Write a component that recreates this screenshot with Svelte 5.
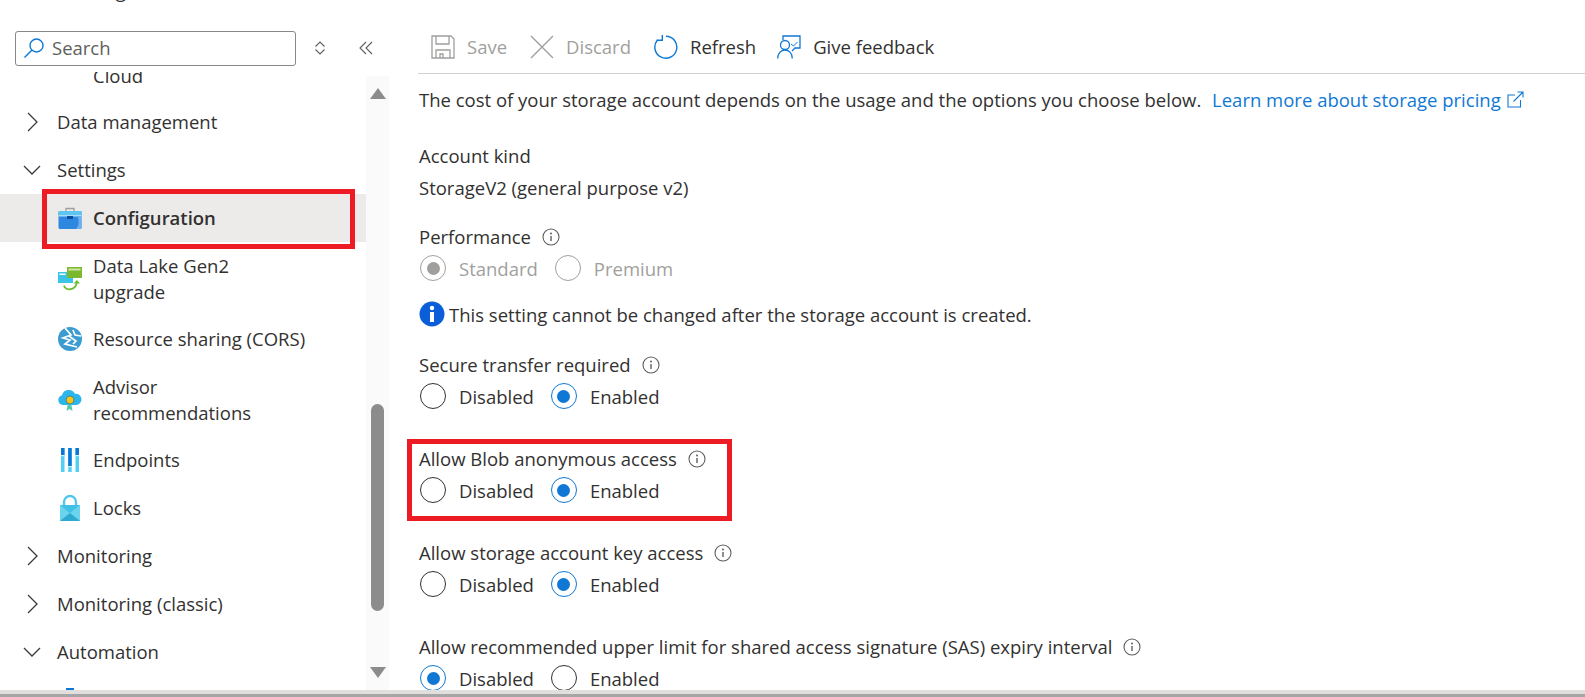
<script>
  const radioGroups = [
    { label: 'Secure transfer required', value: 'Enabled' },
    { label: 'Allow Blob anonymous access', value: 'Enabled', marked: true },
    { label: 'Allow storage account key access', value: 'Enabled' },
    { label: 'Allow recommended upper limit for shared access signature (SAS) expiry interval', value: 'Disabled' }
  ];
  const options = ['Disabled', 'Enabled'];
</script>

{#snippet chevron(open)}
  <svg class="chev" width="24" height="24" viewBox="0 0 24 24" fill="none" stroke="#3b3a39" stroke-width="1.3">
    {#if open}
      <path d="M4 8l8 8 8-8" />
    {:else}
      <path d="M8 3l9 9-9 9" />
    {/if}
  </svg>
{/snippet}

{#snippet infoIcon()}
  <svg class="info" width="18" height="18" viewBox="0 0 18 18" fill="none">
    <circle cx="9" cy="9" r="8" stroke="#605e5c" stroke-width="1.1" />
    <path d="M9 8v5" stroke="#605e5c" stroke-width="1.4" />
    <circle cx="9" cy="5.5" r="1" fill="#605e5c" />
  </svg>
{/snippet}

{#snippet radio(checked, disabled)}
  <span class="radio" class:checked class:disabled></span>
{/snippet}

<div class="page">
  <aside class="sidebar">
    <div class="crumb">Settings</div>
    <div class="search-row">
      <div class="search">
        <svg width="22" height="22" viewBox="0 0 22 22" fill="none" stroke="#0f78d4" stroke-width="1.4">
          <circle cx="13.5" cy="8.5" r="6.5" />
          <path d="M9 13l-7.5 7.5" />
        </svg>
        <span>Search</span>
      </div>
      <svg class="sort" width="12" height="16" viewBox="0 0 12 16" fill="none" stroke="#605e5c" stroke-width="1.1">
        <path d="M1.5 6.5L6 2l4.5 4.5M1.5 9.5L6 14l4.5-4.5" />
      </svg>
      <svg class="collapse" width="14" height="14" viewBox="0 0 14 14" fill="none" stroke="#605e5c" stroke-width="1.1">
        <path d="M7 1L1 7l6 6M13 1L7 7l6 6" />
      </svg>
    </div>

    <div class="nav-wrap">
      <nav class="nav">
        <div class="sub cut-top"><span class="sub-text">Cloud</span></div>
        <div class="group">{@render chevron(false)}<span>Data management</span></div>
        <div class="group">{@render chevron(true)}<span>Settings</span></div>

        <div class="sub active">
          <svg class="ico" width="24" height="24" viewBox="0 0 24 24">
            <path d="M8 5V2.5h8V5" fill="none" stroke="#a19f9d" stroke-width="1.3" />
            <rect x="0.5" y="5" width="23" height="18" rx="1.5" fill="#2f87e0" />
            <rect x="0.5" y="5" width="23" height="4" fill="#5ec4f0" />
            <rect x="0.5" y="9" width="23" height="1.5" fill="#a8dcf7" />
            <rect x="9" y="10" width="6" height="3" fill="#0a4f9e" />
            <path d="M18 23c3-3 3-7 2-12h3.5v12z" fill="#6cb0ee" />
          </svg>
          <span class="sub-text">Configuration</span>
          <span class="mark-config"></span>
        </div>

        <div class="sub tall">
          <svg class="ico" width="24" height="26" viewBox="0 0 24 26">
            <rect x="0" y="6" width="15" height="11" fill="#3cc4e8" />
            <rect x="1.5" y="7.5" width="6" height="1.5" fill="#fff" />
            <rect x="9" y="1" width="15" height="11" fill="#7cb82f" />
            <rect x="10.5" y="2.5" width="12" height="2" fill="#cfe6a8" />
            <path d="M6 19.5c1 5 11 6 13-3" fill="none" stroke="#6fbd35" stroke-width="1.8" />
            <path d="M15.5 17.5l3.5-3.5 3 3.5z" fill="#6fbd35" />
          </svg>
          <span class="sub-text">Data Lake Gen2<br />upgrade</span>
        </div>

        <div class="sub">
          <svg class="ico" width="24" height="24" viewBox="0 0 24 24">
            <circle cx="12" cy="12" r="12" fill="#3c9cd0" />
            <path d="M7 1l6 7-8 3 7 2-5 4 12 3M15 3l2 5 6 1M11 9l7 5-3 3" fill="none" stroke="#fff" stroke-width="1.7" />
          </svg>
          <span class="sub-text">Resource sharing (CORS)</span>
        </div>

        <div class="sub tall">
          <svg class="ico" width="24" height="24" viewBox="0 0 24 24">
            <path d="M5 17a5 5 0 0 1-1-9.8 7 7 0 0 1 13-1.5A5.5 5.5 0 0 1 18.5 17z" fill="#2cb5ea" />
            <path d="M10 15l-1.5 8 3-2 3 2-1.500-8z" fill="#4fc9b0" />
            <circle cx="12" cy="12" r="4" fill="#fdc111" stroke="#1b7fa8" stroke-width="0.8" />
          </svg>
          <span class="sub-text">Advisor<br />recommendations</span>
        </div>

        <div class="sub">
          <svg class="ico" width="24" height="24" viewBox="0 0 24 24">
            <rect x="3" y="0" width="3.5" height="24" fill="#50d0f5" />
            <rect x="10.2" y="0" width="3.5" height="24" fill="#50d0f5" />
            <rect x="17.5" y="0" width="3.5" height="24" fill="#50d0f5" />
            <rect x="3" y="0" width="3.5" height="7" fill="#0a78d4" />
            <rect x="3" y="7" width="3.5" height="1.2" fill="#d6f3fc" />
            <rect x="10.2" y="0" width="3.5" height="18" fill="#0a78d4" />
            <rect x="10.2" y="18" width="3.5" height="1.2" fill="#d6f3fc" />
            <rect x="17.5" y="0" width="3.5" height="7" fill="#0a78d4" />
            <rect x="17.5" y="7" width="3.5" height="1.2" fill="#d6f3fc" />
          </svg>
          <span class="sub-text">Endpoints</span>
        </div>

        <div class="sub">
          <svg class="ico" width="24" height="26" viewBox="0 0 24 26">
            <path d="M6 11V7a6 6 0 0 1 12 0v4" fill="none" stroke="#4fc6ea" stroke-width="2.4" />
            <rect x="2" y="10" width="20" height="16" rx="1" fill="#3fc1e6" />
            <path d="M2 10l10 8 10-8v16H2z" fill="#6bd3ee" />
            <path d="M2 26l10-8 10 8z" fill="#2ea9cf" />
          </svg>
          <span class="sub-text">Locks</span>
        </div>

        <div class="group">{@render chevron(false)}<span>Monitoring</span></div>
        <div class="group">{@render chevron(false)}<span>Monitoring (classic)</span></div>
        <div class="group">{@render chevron(true)}<span>Automation</span></div>
        <div class="sub">
          <svg class="ico" width="24" height="24" viewBox="0 0 24 24"><rect x="8" y="0" width="8" height="20" fill="#0a78d4" /></svg>
        </div>
      </nav>

      <div class="scrollbar">
        <span class="arrow up"></span>
        <div class="track"><div class="thumb"></div></div>
        <span class="arrow down"></span>
      </div>
    </div>
  </aside>

  <main class="main">
    <div class="toolbar">
      <button class="tool off">
        <svg width="24" height="24" viewBox="0 0 24 24" fill="none" stroke="#a19f9d" stroke-width="1.3">
          <path d="M1 1h19l3 3v19H1z" />
          <path d="M5 1v8h13V1M5 23v-8h14v8M9 23v-4h3v4" />
        </svg>
        Save
      </button>
      <button class="tool off">
        <svg width="24" height="24" viewBox="0 0 24 24" fill="none" stroke="#a19f9d" stroke-width="1.4">
          <path d="M1 1l22 22M23 1L1 23" />
        </svg>
        Discard
      </button>
      <button class="tool">
        <svg width="24" height="24" viewBox="0 0 24 24" fill="none" stroke="#0f78d4" stroke-width="1.4">
          <path d="M12 1.2A11 11 0 1 1 3.5 5" />
          <path d="M8.3 0v5.3H2.7" />
        </svg>
        Refresh
      </button>
      <button class="tool feedback">
        <svg width="24" height="24" viewBox="0 0 24 24" fill="none" stroke="#0f78d4" stroke-width="1.3">
          <path d="M6 5V1h17v12h-5l-3 3" />
          <circle cx="8" cy="10" r="4.5" />
          <path d="M0.7 23.5c0-5 3-8.5 7.3-8.5s7.3 3.5 7.3 8.5" />
          <path d="M14 9l2.5 2 4-4" stroke-width="1" />
        </svg>
        Give feedback
      </button>
    </div>

    <div class="content">
      <p class="intro">
        The cost of your storage account depends on the usage and the options you choose below.
        <a href="#pricing">Learn more about storage pricing
          <svg width="17" height="17" viewBox="0 0 17 17" fill="none" stroke="#0f78d4" stroke-width="1.1">
            <path d="M13.5 9v7H1V4h7M6.5 10.5L16 1M10.5 1H16v5.5" />
          </svg>
        </a>
      </p>

      <div class="kind">
        <div class="line">Account kind</div>
        <div class="line">StorageV2 (general purpose v2)</div>
      </div>

      <div class="field perf">
        <div class="label">Performance {@render infoIcon()}</div>
        <div class="radios wide">
          <span class="opt off">{@render radio(true, true)}Standard</span>
          <span class="opt off">{@render radio(false, true)}Premium</span>
        </div>
      </div>

      <div class="notice">
        <svg width="26" height="26" viewBox="0 0 26 26">
          <circle cx="13" cy="13" r="12.5" fill="#0a5fd8" />
          <circle cx="13" cy="7" r="2.2" fill="#fff" />
          <rect x="11" y="11" width="4" height="10" fill="#fff" />
        </svg>
        This setting cannot be changed after the storage account is created.
      </div>

      {#each radioGroups as group}
        <div class="field" class:marked={group.marked}>
          {#if group.marked}<span class="mark-blob"></span>{/if}
          <div class="label">{group.label} {@render infoIcon()}</div>
          <div class="radios">
            {#each options as option}
              <span class="opt">{@render radio(option === group.value, false)}{option}</span>
            {/each}
          </div>
        </div>
      {/each}
    </div>
  </main>
</div>
<div class="bottom-edge"></div>

<style>
  :global(body) {
    margin: 0;
    background: #fff;
    overflow: hidden;
  }

  .page {
    display: flex;
    height: 690px;
    overflow: hidden;
    font-family: "Open Sans", "Noto Sans", sans-serif;
    font-size: 18.5px;
    color: #323130;
  }

  .bottom-edge {
    height: 7px;
    border-top: 4px solid #e1dfdd;
    background: #a6a6a6;
    box-sizing: border-box;
  }

  .sidebar {
    width: 418px;
    flex: none;
    display: flex;
    flex-direction: column;
    overflow: hidden;
  }

  .crumb {
    height: 46px;
    margin-top: -22px;
    padding-left: 66px;
    line-height: 26px;
  }

  .search-row {
    display: flex;
    align-items: center;
    height: 48px;
    flex: none;
    padding-left: 15px;
  }

  .search {
    width: 281px;
    height: 35px;
    box-sizing: border-box;
    border: 1px solid #8a8886;
    border-radius: 3px;
    display: flex;
    align-items: center;
    gap: 7px;
    padding-left: 7px;
    color: #605e5c;
  }

  .search span {
    padding-bottom: 2px;
  }

  .sort {
    margin-left: 18px;
  }

  .collapse {
    margin-left: 33px;
  }

  .nav-wrap {
    display: flex;
    flex: 1;
    min-height: 0;
  }

  .nav {
    width: 366px;
    flex: none;
    overflow: hidden;
  }

  .group {
    height: 48px;
    display: flex;
    align-items: center;
    gap: 13px;
    padding-left: 20px;
  }

  .group span {
    padding-bottom: 2px;
  }

  .chev {
    flex: none;
  }

  .sub {
    height: 48px;
    display: flex;
    align-items: center;
    padding-left: 57px;
    position: relative;
  }

  .sub.tall {
    height: 73px;
  }

  .sub.cut-top {
    height: 26px;
    align-items: flex-start;
    overflow: hidden;
  }

  .cut-top .sub-text {
    margin-top: -9px;
  }

  .ico {
    flex: none;
    position: absolute;
    left: 58px;
    top: 50%;
    transform: translateY(-50%);
  }

  .sub-text {
    margin-left: 36px;
    line-height: 26px;
  }

  .active {
    background: #edebe9;
    font-weight: 600;
  }

  .mark-config {
    position: absolute;
    left: 42px;
    top: -5px;
    width: 313px;
    height: 60px;
    border: 5px solid #ed1c24;
    box-sizing: border-box;
    pointer-events: none;
  }

  .scrollbar {
    width: 23px;
    flex: none;
    margin-top: 4px;
    background: #fafafa;
    display: flex;
    flex-direction: column;
    align-items: center;
  }

  .track {
    flex: 1;
    width: 13px;
    padding-top: 305px;
    box-sizing: border-box;
  }

  .thumb {
    height: 207px;
    border-radius: 7px;
    background: #8c8c8c;
  }

  .arrow {
    width: 0;
    height: 0;
    border-left: 8px solid transparent;
    border-right: 8px solid transparent;
  }

  .arrow.up {
    border-bottom: 11px solid #8c8c8c;
    margin-top: 12px;
  }

  .arrow.down {
    border-top: 11px solid #8c8c8c;
    margin-bottom: 12px;
  }

  .main {
    flex: 1;
    min-width: 0;
  }

  .toolbar {
    height: 74px;
    box-sizing: border-box;
    border-bottom: 1px solid #d2d0ce;
    display: flex;
    align-items: center;
    gap: 23px;
    padding: 20px 0 0 13px;
  }

  .tool {
    display: flex;
    align-items: center;
    gap: 12px;
    background: none;
    border: 0;
    padding: 0;
    font: inherit;
    color: #323130;
  }

  .tool.off {
    color: #a19f9d;
  }

  .tool.feedback {
    margin-left: -2px;
  }

  .content {
    padding: 13px 0 0 1px;
  }

  .intro {
    margin: 0;
    line-height: 26px;
    white-space: nowrap;
  }

  a {
    color: #0f78d4;
    text-decoration: none;
    margin-left: 6px;
  }

  a svg {
    vertical-align: -1px;
    margin-left: 1px;
  }

  .kind {
    margin-top: 27px;
  }

  .line {
    line-height: 32px;
  }

  .field {
    position: relative;
    margin-bottom: 31px;
  }

  .perf {
    margin-top: 17px;
    margin-bottom: 0;
  }

  .label {
    display: flex;
    align-items: center;
    gap: 5px;
    line-height: 32px;
    height: 32px;
    white-space: nowrap;
  }

  .info {
    margin-left: 6px;
  }

  .radios {
    display: flex;
    gap: 17px;
    height: 32px;
    margin-top: -1px;
    margin-left: 1px;
  }

  .opt {
    display: flex;
    align-items: center;
    gap: 13px;
    white-space: nowrap;
  }

  .opt.off {
    color: #a19f9d;
  }

  .radio {
    width: 26px;
    height: 26px;
    box-sizing: border-box;
    border: 1.3px solid #323130;
    border-radius: 50%;
    display: inline-flex;
    align-items: center;
    justify-content: center;
  }

  .radio.checked {
    border-color: #0f78d4;
  }

  .radio.checked::after {
    content: "";
    width: 13px;
    height: 13px;
    border-radius: 50%;
    background: #0f78d4;
  }

  .radio.disabled {
    border-color: #a19f9d;
  }

  .radio.disabled::after {
    background: #a19f9d;
  }

  .notice {
    display: flex;
    align-items: center;
    gap: 4px;
    height: 26px;
    margin-top: 17px;
    margin-bottom: 22px;
  }

  .mark-blob {
    position: absolute;
    left: -12px;
    top: -4px;
    width: 325px;
    height: 82px;
    border: 5px solid #ed1c24;
    box-sizing: border-box;
  }
</style>
